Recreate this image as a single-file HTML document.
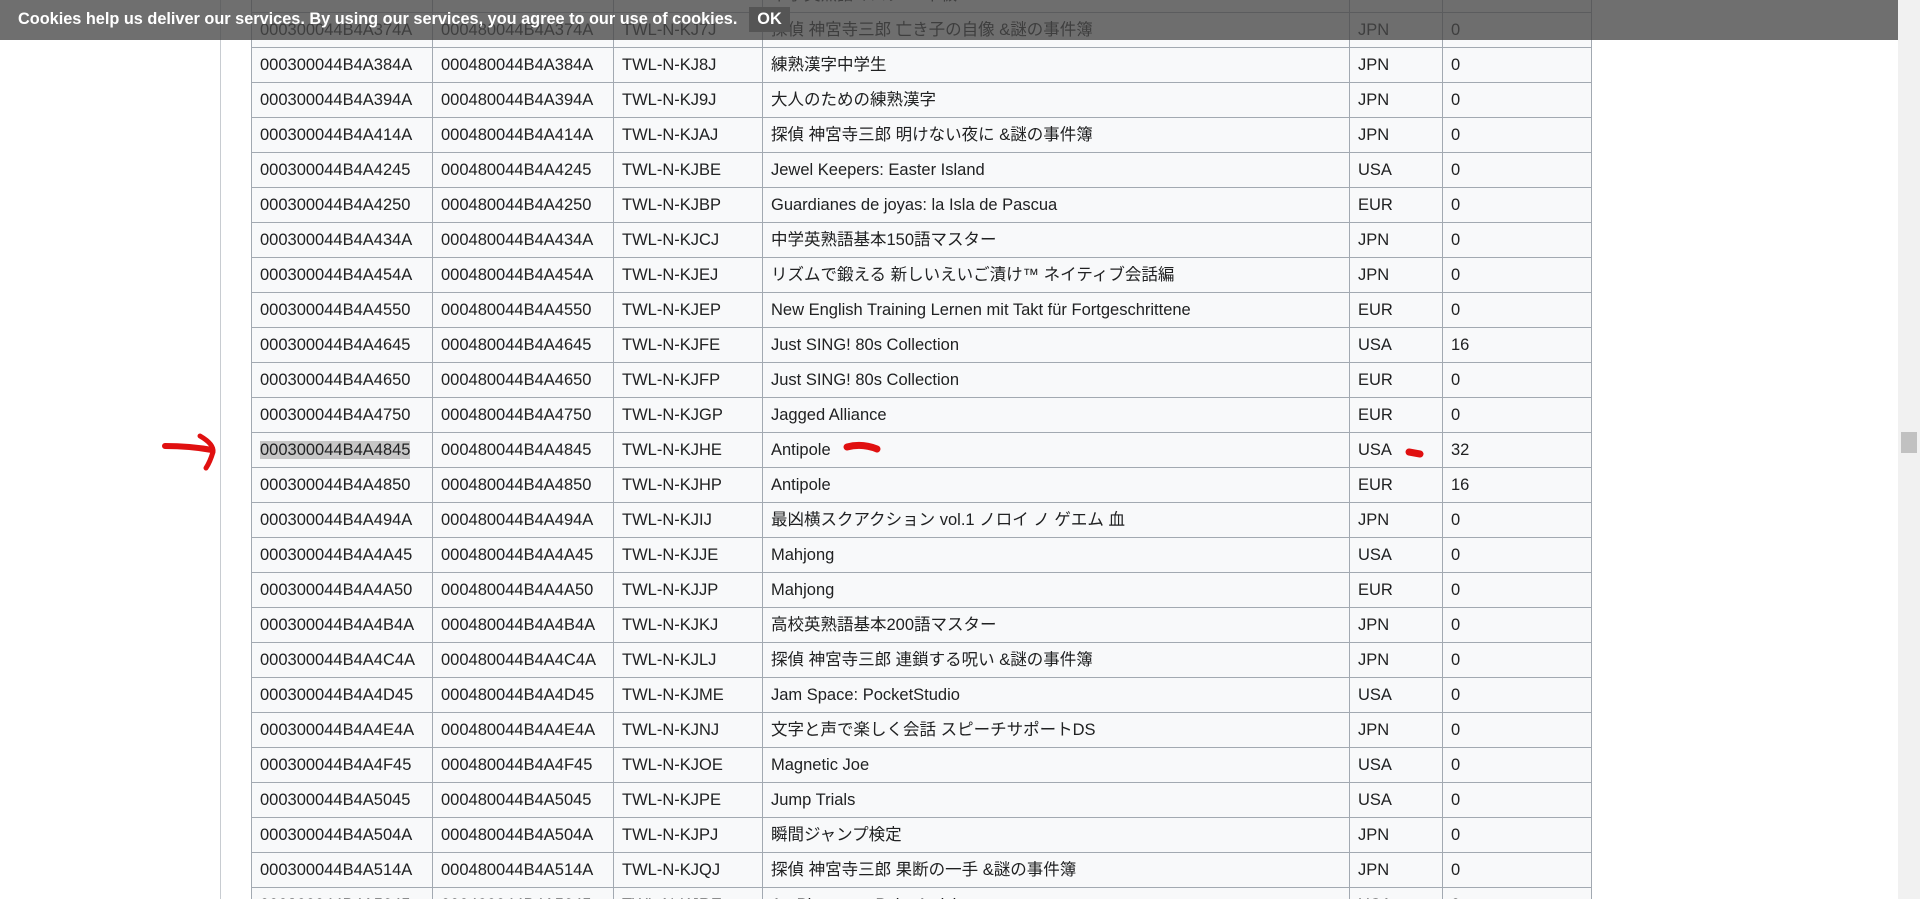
<!DOCTYPE html>
<html><head><meta charset="utf-8"><style>
html,body{margin:0;padding:0;width:1920px;height:899px;overflow:hidden;background:#fff;font-family:"Liberation Sans","Noto Sans CJK JP",sans-serif;}
.wrap{position:relative;width:1920px;height:899px;overflow:hidden;}
.content{position:absolute;left:220px;top:0;width:1700px;height:899px;border-left:1px solid #c8ccd1;background:#fff;}
table{position:absolute;left:251px;top:-23px;border-collapse:collapse;font-size:16.5px;color:#202122;}
td{border:1px solid #a2a9b1;background:#f8f9fa;height:35px;padding:0 8px;white-space:nowrap;box-sizing:border-box;line-height:18px;}
td:nth-child(1){width:181px}td:nth-child(2){width:181px}td:nth-child(3){width:149px}td:nth-child(4){width:587px}td:nth-child(5){width:93px}td:nth-child(6){width:149px}
.sel{background:#c6c6c6;}
.cookie{position:absolute;left:0;top:0;width:1898px;height:40px;background:rgba(70,70,70,0.78);color:#fff;font-weight:bold;font-size:16.3px;}
.cookie span{position:absolute;left:18px;top:10px;}
.ok{position:absolute;left:749px;top:7px;width:41px;height:25px;background:#555;line-height:25px;text-align:center;}
.sb{position:absolute;right:0;top:0;width:22px;height:899px;background:#f1f1f1;}
.th{position:absolute;right:3px;top:432px;width:16px;height:21px;background:#c1c1c1;}
</style></head><body><div class="wrap">
<div class="content"></div>
<table>
<tr><td>000300044B4A364A</td><td>000480044B4A364A</td><td>TWL-N-KJ6J</td><td>中学英熟語マスター 中級</td><td>JPN</td><td>0</td></tr>
<tr><td>000300044B4A374A</td><td>000480044B4A374A</td><td>TWL-N-KJ7J</td><td>探偵 神宮寺三郎 亡き子の自像 &amp;謎の事件簿</td><td>JPN</td><td>0</td></tr>
<tr><td>000300044B4A384A</td><td>000480044B4A384A</td><td>TWL-N-KJ8J</td><td>練熟漢字中学生</td><td>JPN</td><td>0</td></tr>
<tr><td>000300044B4A394A</td><td>000480044B4A394A</td><td>TWL-N-KJ9J</td><td>大人のための練熟漢字</td><td>JPN</td><td>0</td></tr>
<tr><td>000300044B4A414A</td><td>000480044B4A414A</td><td>TWL-N-KJAJ</td><td>探偵 神宮寺三郎 明けない夜に &amp;謎の事件簿</td><td>JPN</td><td>0</td></tr>
<tr><td>000300044B4A4245</td><td>000480044B4A4245</td><td>TWL-N-KJBE</td><td>Jewel Keepers: Easter Island</td><td>USA</td><td>0</td></tr>
<tr><td>000300044B4A4250</td><td>000480044B4A4250</td><td>TWL-N-KJBP</td><td>Guardianes de joyas: la Isla de Pascua</td><td>EUR</td><td>0</td></tr>
<tr><td>000300044B4A434A</td><td>000480044B4A434A</td><td>TWL-N-KJCJ</td><td>中学英熟語基本150語マスター</td><td>JPN</td><td>0</td></tr>
<tr><td>000300044B4A454A</td><td>000480044B4A454A</td><td>TWL-N-KJEJ</td><td>リズムで鍛える 新しいえいご漬け™ ネイティブ会話編</td><td>JPN</td><td>0</td></tr>
<tr><td>000300044B4A4550</td><td>000480044B4A4550</td><td>TWL-N-KJEP</td><td>New English Training Lernen mit Takt für Fortgeschrittene</td><td>EUR</td><td>0</td></tr>
<tr><td>000300044B4A4645</td><td>000480044B4A4645</td><td>TWL-N-KJFE</td><td>Just SING! 80s Collection</td><td>USA</td><td>16</td></tr>
<tr><td>000300044B4A4650</td><td>000480044B4A4650</td><td>TWL-N-KJFP</td><td>Just SING! 80s Collection</td><td>EUR</td><td>0</td></tr>
<tr><td>000300044B4A4750</td><td>000480044B4A4750</td><td>TWL-N-KJGP</td><td>Jagged Alliance</td><td>EUR</td><td>0</td></tr>
<tr><td><span class="sel">000300044B4A4845</span></td><td>000480044B4A4845</td><td>TWL-N-KJHE</td><td>Antipole</td><td>USA</td><td>32</td></tr>
<tr><td>000300044B4A4850</td><td>000480044B4A4850</td><td>TWL-N-KJHP</td><td>Antipole</td><td>EUR</td><td>16</td></tr>
<tr><td>000300044B4A494A</td><td>000480044B4A494A</td><td>TWL-N-KJIJ</td><td>最凶横スクアクション vol.1 ノロイ ノ ゲエム 血</td><td>JPN</td><td>0</td></tr>
<tr><td>000300044B4A4A45</td><td>000480044B4A4A45</td><td>TWL-N-KJJE</td><td>Mahjong</td><td>USA</td><td>0</td></tr>
<tr><td>000300044B4A4A50</td><td>000480044B4A4A50</td><td>TWL-N-KJJP</td><td>Mahjong</td><td>EUR</td><td>0</td></tr>
<tr><td>000300044B4A4B4A</td><td>000480044B4A4B4A</td><td>TWL-N-KJKJ</td><td>高校英熟語基本200語マスター</td><td>JPN</td><td>0</td></tr>
<tr><td>000300044B4A4C4A</td><td>000480044B4A4C4A</td><td>TWL-N-KJLJ</td><td>探偵 神宮寺三郎 連鎖する呪い &amp;謎の事件簿</td><td>JPN</td><td>0</td></tr>
<tr><td>000300044B4A4D45</td><td>000480044B4A4D45</td><td>TWL-N-KJME</td><td>Jam Space: PocketStudio</td><td>USA</td><td>0</td></tr>
<tr><td>000300044B4A4E4A</td><td>000480044B4A4E4A</td><td>TWL-N-KJNJ</td><td>文字と声で楽しく会話 スピーチサポートDS</td><td>JPN</td><td>0</td></tr>
<tr><td>000300044B4A4F45</td><td>000480044B4A4F45</td><td>TWL-N-KJOE</td><td>Magnetic Joe</td><td>USA</td><td>0</td></tr>
<tr><td>000300044B4A5045</td><td>000480044B4A5045</td><td>TWL-N-KJPE</td><td>Jump Trials</td><td>USA</td><td>0</td></tr>
<tr><td>000300044B4A504A</td><td>000480044B4A504A</td><td>TWL-N-KJPJ</td><td>瞬間ジャンプ検定</td><td>JPN</td><td>0</td></tr>
<tr><td>000300044B4A514A</td><td>000480044B4A514A</td><td>TWL-N-KJQJ</td><td>探偵 神宮寺三郎 果断の一手 &amp;謎の事件簿</td><td>JPN</td><td>0</td></tr>
<tr><td>000300044B4A5245</td><td>000480044B4A5245</td><td>TWL-N-KJRE</td><td>Art Playroom: Paint Activity</td><td>USA</td><td>0</td></tr>
</table>
<svg style="position:absolute;left:0;top:0" width="1920" height="899">
<path d="M165 446 Q190 446 212 450" stroke="#e01010" stroke-width="6" fill="none" stroke-linecap="round"/>
<path d="M200 436 Q214 444 213 452 Q210 462 206 468" stroke="#e01010" stroke-width="5" fill="none" stroke-linecap="round"/>
<path d="M847 447 Q862 443 877 449" stroke="#e01010" stroke-width="7" fill="none" stroke-linecap="round"/>
<path d="M1409 452 L1420 454" stroke="#e01010" stroke-width="7" fill="none" stroke-linecap="round"/>
</svg>
<div class="cookie"><span>Cookies help us deliver our services. By using our services, you agree to our use of cookies.</span><div class="ok">OK</div></div>
<div class="sb"><div class="th"></div></div>
</div></body></html>
